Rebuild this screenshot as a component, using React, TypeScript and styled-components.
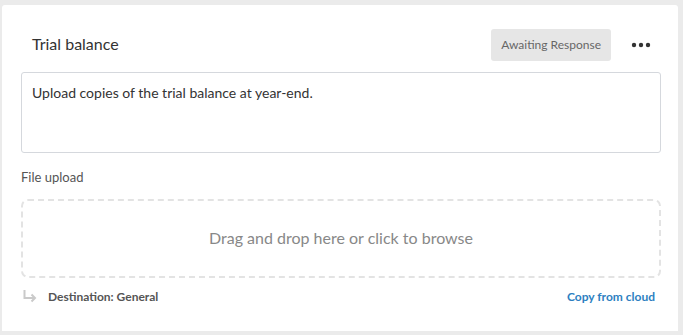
import { FC } from 'react'
import styled, { createGlobalStyle } from 'styled-components'

const GlobalStyle = createGlobalStyle`
  html, body {
    margin: 0;
    padding: 0;
    background: #ebebeb;
    font-family: Lato, 'Open Sans', 'Liberation Sans', sans-serif;
  }
`

const Page = styled.div`
  padding: 5px 5px 0 2px;
  height: 335px;
  box-sizing: border-box;
`

const Card = styled.section`
  background: #fff;
  border-radius: 3px 3px 0 0;
  height: 326px;
  box-sizing: border-box;
  padding: 24px 17px 0 19px;
  display: flex;
  flex-direction: column;
`

const Header = styled.div`
  display: flex;
  align-items: center;
  height: 32px;
  padding: 0 10px 0 11px;
`

const Title = styled.h2`
  margin: 0 0 3px;
  flex: 1;
  font-size: 16px;
  font-weight: 400;
  color: #333;
`

const Badge = styled.span`
  display: inline-flex;
  align-items: center;
  height: 32px;
  padding: 0 10px 2px;
  box-sizing: border-box;
  border-radius: 3px;
  background: #e6e6e6;
  color: #666;
  font-size: 12px;
`

const MoreButton = styled.button`
  margin-left: 20px;
  width: 20px;
  height: 20px;
  border: 0;
  padding: 0;
  background: transparent;
  display: flex;
  align-items: center;
  justify-content: center;
  cursor: pointer;
`

const Description = styled.div`
  margin-top: 11px;
  height: 81px;
  box-sizing: border-box;
  border: 1px solid #d5d8dd;
  border-radius: 3px;
  padding: 11px 10px;
  font-size: 14px;
  color: #333;
`

const Label = styled.div`
  margin-top: 16px;
  font-size: 13px;
  color: #555;
`

const Dropzone = styled.div`
  margin-top: 14px;
  height: 79px;
  box-sizing: border-box;
  border: 2px dashed #e3e3e3;
  border-radius: 7px;
  display: flex;
  align-items: center;
  justify-content: center;
  padding-bottom: 2px;
  font-size: 16px;
  color: #888;
  cursor: pointer;
`

const Footer = styled.div`
  display: flex;
  align-items: center;
  margin-top: 8px;
  height: 20px;
  padding: 0 6px 0 2px;
`

const Destination = styled.span`
  flex: 1;
  display: flex;
  align-items: center;
  gap: 11px;
  font-size: 12px;
  font-weight: 700;
  color: #555;
`

const CloudLink = styled.a`
  font-size: 12px;
  font-weight: 700;
  color: #2d7fc1;
  text-decoration: none;
  cursor: pointer;
`

const Dots: FC = () => (
  <svg width='20' height='6' viewBox='0 0 20 6'>
    <circle cx='3' cy='3' r='2.2' fill='#333' />
    <circle cx='10' cy='3' r='2.2' fill='#333' />
    <circle cx='17' cy='3' r='2.2' fill='#333' />
  </svg>
)

const ReturnArrow: FC = () => (
  <svg width='14' height='13' viewBox='0 0 14 13'>
    <path
      d='M1.5 0 V8 H12 M8.5 4.5 L12 8 L8.5 11.5'
      fill='none'
      stroke='#cacaca'
      strokeWidth='2'
    />
  </svg>
)

const App: FC = () => (
  <Page>
    <GlobalStyle />
    <Card>
      <Header>
        <Title>Trial balance</Title>
        <Badge>Awaiting Response</Badge>
        <MoreButton aria-label='More'>
          <Dots />
        </MoreButton>
      </Header>
      <Description>Upload copies of the trial balance at year-end.</Description>
      <Label>File upload</Label>
      <Dropzone>Drag and drop here or click to browse</Dropzone>
      <Footer>
        <Destination>
          <ReturnArrow />
          Destination: General
        </Destination>
        <CloudLink>Copy from cloud</CloudLink>
      </Footer>
    </Card>
  </Page>
)

export default App
